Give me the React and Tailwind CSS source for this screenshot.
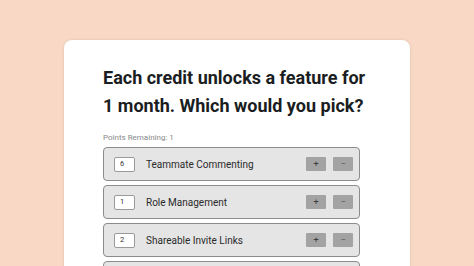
export default function App() {
  const rows = [
    { n: 6, label: "Teammate Commenting" },
    { n: 1, label: "Role Management" },
    { n: 2, label: "Shareable Invite Links" },
    { n: 0, label: "" },
  ];
  return (
    <div className="w-[474px] h-[266px] overflow-hidden bg-[#f9d9c6] pt-[40px] pl-[64px]" style={{ fontFamily: "Roboto, 'Liberation Sans', sans-serif" }}>
      <div className="w-[346px] h-[260px] bg-white rounded-[8px] shadow-[0_0_3px_rgba(0,0,0,0.12)] pt-[24px] pl-[39px]">
        <h1 className="w-[267px] text-[18px] leading-[28px] font-bold text-[#1a1d21]">
          Each credit unlocks a feature for 1 month. Which would you pick?
        </h1>
        <div className="mt-[12px] text-[8px] leading-[12px] font-normal text-[#8a8a8a]">Points Remaining: 1</div>
        <div className="mt-[3px] w-[257px] flex flex-col gap-[4px]">
          {rows.map((r, i) => (
            <div key={i} className="h-[34px] rounded-[4px] border border-[#8c8c8c] bg-[#e5e5e5] flex items-center pl-[10px] pr-[6px]">
              {r.label && (
                <>
                  <div className="w-[21px] h-[15px] bg-white border border-[#9a9a9a] rounded-[2px] text-[7.5px] text-[#333] flex items-center pl-[5px]">{r.n}</div>
                  <div className="ml-[11px] text-[10px] text-[#2a2a2a]">{r.label}</div>
                  <div className="ml-auto flex gap-[7px]">
                    <div className="w-[20px] h-[14px] bg-[#a3a3a3] rounded-[1px] flex items-center justify-center text-[9px] leading-none text-[#3a3a3a]">+</div>
                    <div className="w-[20px] h-[14px] bg-[#a3a3a3] rounded-[1px] flex items-center justify-center text-[9px] leading-none text-[#5a5a5a]">−</div>
                  </div>
                </>
              )}
            </div>
          ))}
        </div>
      </div>
    </div>
  );
}
